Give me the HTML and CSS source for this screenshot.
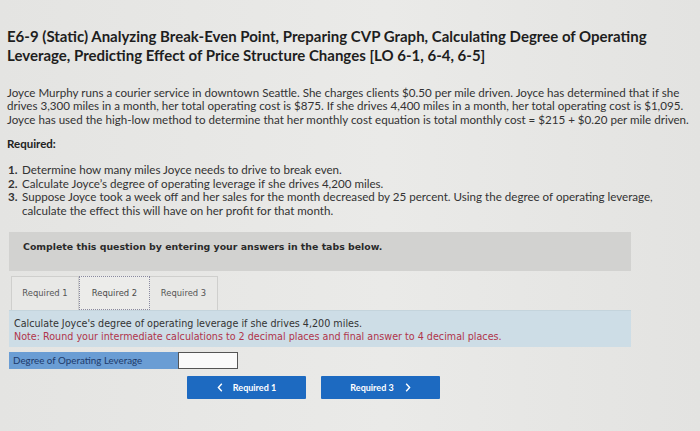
FILE: index.html
```html
<!DOCTYPE html>
<html>
<head>
<meta charset="utf-8">
<link rel="stylesheet" href="styles.css">
</head>
<body>
<div class="page">
  <h1 class="title">E6-9 (Static) Analyzing Break-Even Point, Preparing CVP Graph, Calculating Degree of Operating Leverage, Predicting Effect of Price Structure Changes [LO 6-1, 6-4, 6-5]</h1>
  <p class="intro">Joyce Murphy runs a courier service in downtown Seattle. She charges clients $0.50 per mile driven. Joyce has determined that if she drives 3,300 miles in a month, her total operating cost is $875. If she drives 4,400 miles in a month, her total operating cost is $1,095. Joyce has used the high-low method to determine that her monthly cost equation is total monthly cost = $215 + $0.20 per mile driven.</p>
  <div class="req-head">Required:</div>
  <ol class="reqs">
    <li><span class="num">1.</span><span>Determine how many miles Joyce needs to drive to break even.</span></li>
    <li><span class="num">2.</span><span>Calculate Joyce’s degree of operating leverage if she drives 4,200 miles.</span></li>
    <li><span class="num">3.</span><span>Suppose Joyce took a week off and her sales for the month decreased by 25 percent. Using the degree of operating leverage, calculate the effect this will have on her profit for that month.</span></li>
  </ol>
  <div class="complete">Complete this question by entering your answers in the tabs below.</div>
  <div class="tabs">
    <div class="tab">Required 1</div>
    <div class="tab active">Required 2</div>
    <div class="tab">Required 3</div>
  </div>
  <div class="panel">
    <div>Calculate Joyce's degree of operating leverage if she drives 4,200 miles.</div>
    <div class="note">Note: Round your intermediate calculations to 2 decimal places and final answer to 4 decimal places.</div>
  </div>
  <div class="answer">
    <div class="label">Degree of Operating Leverage</div>
    <div class="input"></div>
  </div>
  <div class="nav">
    <div class="btn"><svg class="chev" width="6" height="9" viewBox="0 0 6 9"><path d="M4.8 0.8 L1.4 4.5 L4.8 8.2" fill="none" stroke="#fff" stroke-width="1.4"/></svg>Required 1</div>
    <div class="btn">Required 3<svg class="chev right" width="6" height="9" viewBox="0 0 6 9"><path d="M1.2 0.8 L4.6 4.5 L1.2 8.2" fill="none" stroke="#fff" stroke-width="1.4"/></svg></div>
  </div>
</div>
</body>
</html>
```
FILE: styles.css
```css
html, body {
  margin: 0;
  padding: 0;
}
body {
  width: 700px;
  height: 431px;
  overflow: hidden;
  background: linear-gradient(90deg, #e4e4e2 0%, #eaeae8 55%, #e3e3e1 100%);
  font-family: Lato, "Liberation Sans", sans-serif;
  color: #2b2b2b;
}
.page {
  padding: 27px 0 0 7px;
}
.title {
  margin: 0;
  font-size: 15px;
  line-height: 19px;
  font-weight: 700;
  color: #1e1e1e;
  width: 670px;
}
.intro {
  margin: 21px 0 0;
  font-size: 11.6px;
  line-height: 13.4px;
  color: #333;
  width: 691px;
}
.req-head {
  margin-top: 11px;
  font-size: 11.5px;
  font-weight: 700;
  color: #222;
}
.reqs {
  list-style: none;
  margin: 13px 0 0;
  padding: 0 0 0 1px;
  font-size: 11.6px;
  line-height: 13.5px;
  color: #333;
  width: 672px;
}
.reqs li {
  display: flex;
}
.reqs .num {
  font-weight: 700;
  width: 14px;
  flex: none;
}
.complete {
  margin: 15px 0 0 2px;
  width: 622px;
  height: 39px;
  box-sizing: border-box;
  padding: 9px 0 0 14px;
  background: #d2d2d0;
  font-family: "DejaVu Sans", Verdana, sans-serif;
  font-size: 9.4px;
  font-weight: 700;
  color: #2a2a2a;
}
.tabs {
  display: flex;
  margin: 5px 0 0 4px;
  height: 34px;
}
.tab {
  box-sizing: border-box;
  height: 34px;
  padding: 11px 0 0;
  text-align: center;
  width: 68px;
  border: 1px solid #cfcfcd;
  border-bottom: none;
  background: #e8e8e6;
  font-family: "DejaVu Sans", Verdana, sans-serif;
  font-size: 8.4px;
  color: #555;
}
.tab + .tab {
  border-left: none;
}
.tab.active {
  width: 71px;
  border: 1px dotted #8a8aa0;
  background: #ececea;
  color: #4a4a4a;
}
.panel {
  margin-left: 2px;
  width: 622px;
  height: 37px;
  box-sizing: border-box;
  padding: 6px 0 0 5px;
  background: #cddde6;
  font-family: "DejaVu Sans", Verdana, sans-serif;
  font-size: 9.6px;
  line-height: 13px;
  color: #333;
  border-top: 1px solid #c4d4dc;
}
.panel .note {
  color: #b0344a;
}
.answer {
  display: flex;
  margin: 5px 0 0 2px;
  height: 17px;
}
.label {
  width: 169px;
  box-sizing: border-box;
  padding: 2px 0 0 4px;
  background: #6a9dd4;
  font-family: Lato, "Liberation Sans", sans-serif;
  font-size: 9.8px;
  color: #1d3a6a;
}
.input {
  width: 60px;
  box-sizing: border-box;
  background: #fafafa;
  border: 1px solid #555;
}
.nav {
  display: flex;
  margin: 7px 0 0 180px;
  gap: 15px;
}
.btn {
  width: 119px;
  height: 23px;
  box-sizing: border-box;
  display: flex;
  align-items: center;
  justify-content: center;
  background: #1d6ac1;
  color: #fff;
  font-family: Lato, "Liberation Sans", sans-serif;
  font-size: 9px;
  font-weight: 700;
  border-radius: 1px;
}
.chev {
  margin-right: 10px;
}
.chev.right {
  margin: 0 0 0 11px;
}
```
